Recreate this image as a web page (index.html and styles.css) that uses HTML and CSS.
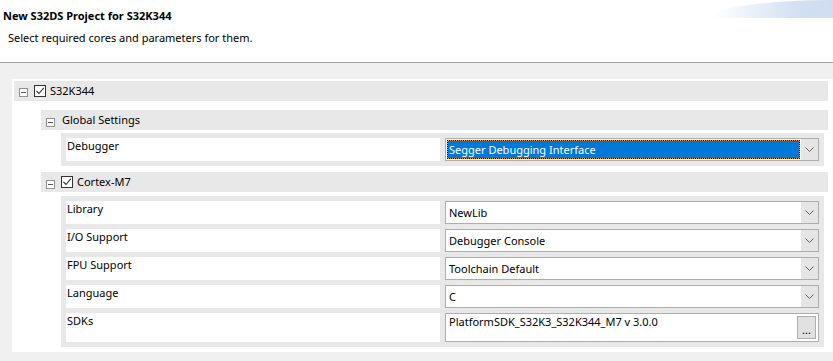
FILE: index.html
```html
<!DOCTYPE html>
<html lang="en">
<head>
    <meta charset="UTF-8">
    <title>New S32DS Project</title>
    <link rel="stylesheet" href="styles.css">
</head>
<body>
    <div class="header">
        <div class="header-shine"></div>
        <div class="title">New S32DS Project for S32K344</div>
        <div class="subtitle">Select required cores and parameters for them.</div>
    </div>

    <div class="panel">
        <div class="node">
            <div class="node-head">
                <span class="toggle"></span>
                <span class="check"><svg width="10" height="10" viewBox="0 0 10 10"><path d="M1.5 5 L4 7.5 L8.8 1.8" fill="none" stroke="#333" stroke-width="1.1"/></svg></span>
                <span class="node-label">S32K344</span>
            </div>
            <div class="node-body">
                <div class="node sub">
                    <div class="node-head">
                        <span class="toggle"></span>
                        <span class="node-label">Global Settings</span>
                    </div>
                    <div class="params">
                        <div class="param">
                            <div class="param-name">Debugger</div>
                            <div class="combo">
                                <span class="combo-value selected">Segger Debugging Interface</span>
                                <span class="combo-arrow"><svg width="9" height="5" viewBox="0 0 9 5"><path d="M0.5 0.5 L4.5 4.5 L8.5 0.5" fill="none" stroke="#606060" stroke-width="1"/></svg></span>
                            </div>
                        </div>
                    </div>
                </div>

                <div class="node sub">
                    <div class="node-head">
                        <span class="toggle"></span>
                        <span class="check"><svg width="10" height="10" viewBox="0 0 10 10"><path d="M1.5 5 L4 7.5 L8.8 1.8" fill="none" stroke="#333" stroke-width="1.1"/></svg></span>
                        <span class="node-label">Cortex-M7</span>
                    </div>
                    <div class="params">
                        <div class="param">
                            <div class="param-name">Library</div>
                            <div class="combo">
                                <span class="combo-value">NewLib</span>
                                <span class="combo-arrow"><svg width="9" height="5" viewBox="0 0 9 5"><path d="M0.5 0.5 L4.5 4.5 L8.5 0.5" fill="none" stroke="#606060" stroke-width="1"/></svg></span>
                            </div>
                        </div>
                        <div class="param">
                            <div class="param-name">I/O Support</div>
                            <div class="combo">
                                <span class="combo-value">Debugger Console</span>
                                <span class="combo-arrow"><svg width="9" height="5" viewBox="0 0 9 5"><path d="M0.5 0.5 L4.5 4.5 L8.5 0.5" fill="none" stroke="#606060" stroke-width="1"/></svg></span>
                            </div>
                        </div>
                        <div class="param">
                            <div class="param-name">FPU Support</div>
                            <div class="combo">
                                <span class="combo-value">Toolchain Default</span>
                                <span class="combo-arrow"><svg width="9" height="5" viewBox="0 0 9 5"><path d="M0.5 0.5 L4.5 4.5 L8.5 0.5" fill="none" stroke="#606060" stroke-width="1"/></svg></span>
                            </div>
                        </div>
                        <div class="param">
                            <div class="param-name">Language</div>
                            <div class="combo">
                                <span class="combo-value">C</span>
                                <span class="combo-arrow"><svg width="9" height="5" viewBox="0 0 9 5"><path d="M0.5 0.5 L4.5 4.5 L8.5 0.5" fill="none" stroke="#606060" stroke-width="1"/></svg></span>
                            </div>
                        </div>
                        <div class="param tall">
                            <div class="param-name">SDKs</div>
                            <div class="sdk-box">
                                <span class="sdk-text">PlatformSDK_S32K3_S32K344_M7 v 3.0.0</span>
                                <span class="browse">...</span>
                            </div>
                        </div>
                    </div>
                </div>
            </div>
        </div>
    </div>
</body>
</html>
```

FILE: styles.css
```css
body {
    margin: 0;
    background-color: #f0f0f0;
    font-family: "Noto Sans", sans-serif;
    font-size: 11px;
    line-height: 16px;
    color: #000;
    overflow: hidden;
}

.header {
    position: relative;
    background-color: #fff;
    height: 62px;
    border-bottom: 1px solid #a0a0a0;
    padding: 0 3px;
    box-sizing: content-box;
}

.header-shine {
    position: absolute;
    top: 0;
    right: 0;
    width: 120px;
    height: 18px;
    border-top-left-radius: 100% 95%;
    background: linear-gradient(to right, rgba(214, 226, 245, 0), #d3e0f3 70%, #cfdcf1);
}

.title {
    padding-top: 8px;
    font-weight: bold;
}

.subtitle {
    margin-top: 6px;
    padding-left: 5px;
}

.panel {
    margin: 16px 0 0 12px;
    background-color: #fff;
    padding: 2px 5px 5px 2px;
}

.node-head {
    display: flex;
    align-items: center;
    height: 20px;
    background-color: #e8e8e8;
    padding-left: 5px;
}

.node-label {
    margin-left: 4px;
    padding-bottom: 1px;
}

.toggle {
    position: relative;
    width: 9px;
    height: 9px;
    box-sizing: border-box;
    border: 1px solid #919191;
    background-color: #fff;
    margin-right: 6px;
    margin-top: 3px;
}

.toggle::after {
    content: "";
    position: absolute;
    left: 1px;
    top: 3px;
    width: 5px;
    height: 1px;
    background-color: #555;
}

.sub .toggle {
    margin-right: 3px;
    margin-top: 4px;
}

.check {
    display: flex;
    align-items: center;
    justify-content: center;
    width: 12px;
    height: 12px;
    box-sizing: border-box;
    border: 1px solid #333;
    background-color: #fff;
}

.sub .check {
    margin-left: 3px;
}

.sub .check + .node-label {
    margin-left: 4px;
}

.node-body {
    margin: 9px 0 0 27px;
}

.sub .node-head + .params {
    margin-top: 3px;
}

.sub + .sub {
    margin-top: 6px;
}

.sub + .sub .node-head + .params {
    margin-top: 4px;
}

.params {
    margin: 0 4px 0 20px;
    background-color: #e8e8e8;
    padding: 5px;
    display: flex;
    flex-direction: column;
    gap: 5px;
}

.param {
    display: grid;
    grid-template-columns: 1fr 1fr;
    gap: 5px;
    height: 23px;
}

.param.tall {
    height: 29px;
}

.param-name {
    background-color: #fff;
    padding-left: 1px;
}

.combo {
    display: flex;
    border: 1px solid #adadad;
    background-color: #fff;
}

.combo-value {
    flex: 1;
    padding-left: 3px;
    line-height: 21px;
}

.combo-value.selected {
    margin: 1px;
    padding-left: 1px;
    line-height: 17px;
    color: #fff;
    border: 1px dotted #000;
    background: linear-gradient(#0078d7, #0078d7) padding-box, #e89438;
}

.combo-arrow {
    display: flex;
    align-items: center;
    justify-content: center;
    width: 17px;
    background-color: #e5e5e5;
}

.sdk-box {
    display: flex;
    justify-content: space-between;
    align-items: flex-end;
    border: 1px solid #adadad;
    background-color: #fff;
    padding: 0 2px 2px 3px;
}

.sdk-text {
    align-self: flex-start;
}

.browse {
    width: 19px;
    height: 23px;
    box-sizing: border-box;
    border: 1px solid #adadad;
    background-color: #e1e1e1;
    text-align: center;
    line-height: 26px;
    font-size: 11px;
}
```
